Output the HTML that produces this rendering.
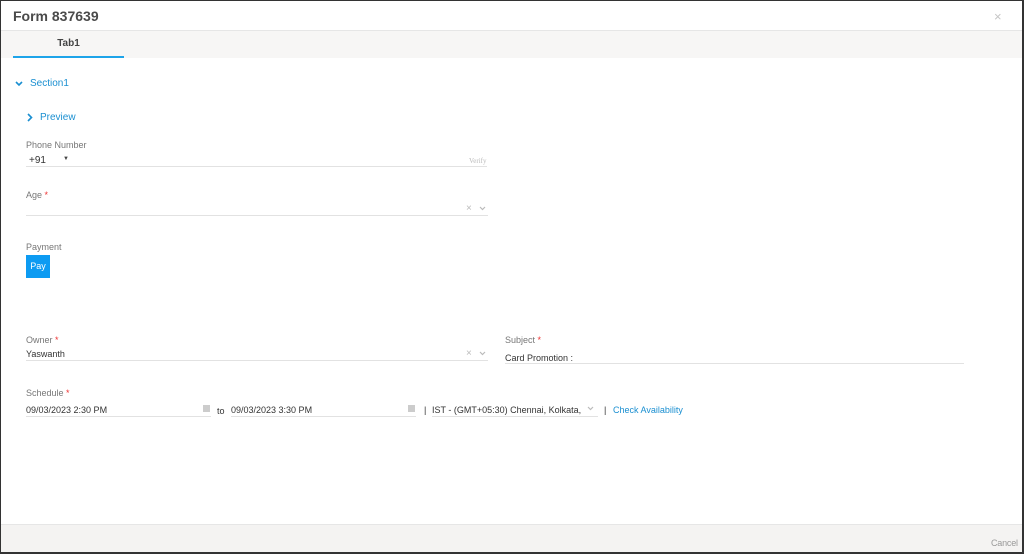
<!DOCTYPE html>
<html><head><meta charset="utf-8"><style>
*{box-sizing:border-box;margin:0;padding:0}
body{width:1024px;height:554px;overflow:hidden;background:#fff;font-family:"Liberation Sans",sans-serif;position:relative}
.frame{position:absolute;left:0;top:0;width:1024px;height:554px;border:1px solid #333;border-right:2px solid #333;border-bottom:2px solid #333}
.abs{position:absolute}
.hdr{left:1px;top:1px;width:1021px;height:30px;background:#fff;border-bottom:1px solid #e6e6e6}
.title{left:13px;top:8px;font-size:14px;color:#4a4a4a;font-weight:bold}
.tabs{left:1px;top:31px;width:1021px;height:27px;background:#f7f6f5}
.tab{left:13px;top:38px;width:111px;text-align:center;font-size:10px;color:#444;font-weight:bold}
.tabline{left:13px;top:56px;width:111px;height:2px;background:#1ea4e9}
.blue{color:#1a8fd1}
.lbl{font-size:9px;color:#777}
.req{color:#e33}
.val{font-size:9px;color:#333}
.line{height:1px;background:#e2e2e2}
.foot{left:1px;top:524px;width:1021px;height:28px;background:#f4f3f2;border-top:1px solid #e6e6e6}
.g{color:#bbb;font-size:10px}
.sq{width:7px;height:7px;background:#ccc}
</style></head><body>
<div class="abs hdr"></div>
<div class="abs title">Form 837639</div>
<div class="abs g" style="left:994px;top:9px;font-size:13px;color:#c5c5c5">×</div>
<div class="abs tabs"></div>
<div class="abs tab">Tab1</div>
<div class="abs tabline"></div>

<svg class="abs" style="left:15px;top:81px" width="8" height="6"><path d="M1 1 L4 4 L7 1" stroke="#1a8fd1" stroke-width="1.6" fill="none"/></svg>
<div class="abs blue" style="left:30px;top:78px;font-size:10px">Section1</div>
<svg class="abs" style="left:27px;top:113px" width="6" height="9"><path d="M1 1 L4.5 4.5 L1 8" stroke="#1a8fd1" stroke-width="1.6" fill="none"/></svg>
<div class="abs blue" style="left:40px;top:112px;font-size:10px">Preview</div>

<div class="abs lbl" style="left:26px;top:140px">Phone Number</div>
<div class="abs val" style="left:29px;top:155px;font-size:10px">+91</div>
<div class="abs" style="left:63px;top:156px;font-size:6px;color:#444">▼</div>
<div class="abs" style="left:469px;top:157px;font-size:7px;color:#bbb;font-family:'Liberation Serif',serif">Verify</div>
<div class="abs line" style="left:26px;top:166px;width:461px"></div>

<div class="abs lbl" style="left:26px;top:190px">Age <span class="req">*</span></div>
<div class="abs g" style="left:466px;top:203px">×</div>
<svg class="abs" style="left:479px;top:206px" width="7" height="5"><path d="M1 1 L3.5 3.5 L6 1" stroke="#bbb" stroke-width="1.2" fill="none"/></svg>
<div class="abs line" style="left:26px;top:215px;width:462px"></div>

<div class="abs lbl" style="left:26px;top:242px">Payment</div>
<div class="abs" style="left:26px;top:255px;width:24px;height:23px;background:#0d9bf2;color:#fff;font-size:9px;text-align:center;line-height:23px">Pay</div>

<div class="abs lbl" style="left:26px;top:335px">Owner <span class="req">*</span></div>
<div class="abs val" style="left:26px;top:349px">Yaswanth</div>
<div class="abs g" style="left:466px;top:348px">×</div>
<svg class="abs" style="left:479px;top:351px" width="7" height="5"><path d="M1 1 L3.5 3.5 L6 1" stroke="#bbb" stroke-width="1.2" fill="none"/></svg>
<div class="abs line" style="left:26px;top:360px;width:462px"></div>

<div class="abs lbl" style="left:505px;top:335px">Subject <span class="req">*</span></div>
<div class="abs val" style="left:505px;top:353px">Card Promotion :</div>
<div class="abs line" style="left:505px;top:363px;width:459px"></div>

<div class="abs lbl" style="left:26px;top:388px">Schedule <span class="req">*</span></div>
<div class="abs val" style="left:26px;top:405px">09/03/2023 2:30 PM</div>
<div class="abs sq" style="left:203px;top:405px"></div>
<div class="abs line" style="left:26px;top:416px;width:185px"></div>
<div class="abs val" style="left:217px;top:406px">to</div>
<div class="abs val" style="left:231px;top:405px">09/03/2023 3:30 PM</div>
<div class="abs sq" style="left:408px;top:405px"></div>
<div class="abs line" style="left:231px;top:416px;width:185px"></div>
<div class="abs val" style="left:424px;top:405px">|</div>
<div class="abs val" style="left:432px;top:405px">IST - (GMT+05:30) Chennai, Kolkata,</div>
<svg class="abs" style="left:587px;top:406px" width="7" height="5"><path d="M1 1 L3.5 3.5 L6 1" stroke="#bbb" stroke-width="1.2" fill="none"/></svg>
<div class="abs line" style="left:432px;top:416px;width:166px"></div>
<div class="abs val" style="left:604px;top:405px">|</div>
<div class="abs blue" style="left:613px;top:405px;font-size:9px">Check Availability</div>

<div class="abs foot"></div>
<div class="abs" style="left:991px;top:538px;font-size:9px;color:#999;letter-spacing:-0.2px">Cancel</div>
<div class="frame"></div>
</body></html>
